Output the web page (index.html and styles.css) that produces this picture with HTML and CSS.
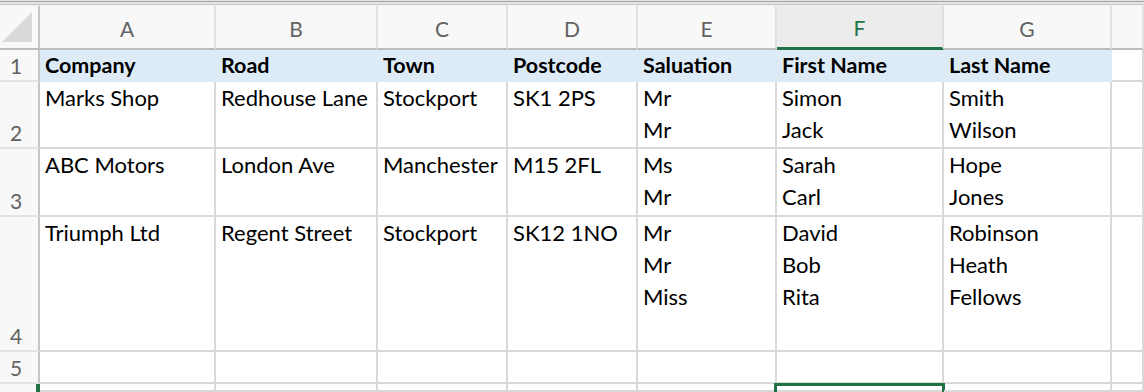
FILE: index.html
```html
<!DOCTYPE html>
<html lang="en">
<head>
  <meta charset="UTF-8">
  <title>Contacts</title>
  <link rel="stylesheet" href="styles.css">
</head>
<body>
  <div class="window-edge"></div>
  <div class="sheet">
    <div class="corner"><span class="corner-mark"></span></div>
    <div class="col-head">A</div>
    <div class="col-head">B</div>
    <div class="col-head">C</div>
    <div class="col-head">D</div>
    <div class="col-head">E</div>
    <div class="col-head active">F</div>
    <div class="col-head">G</div>
    <div class="col-head"></div>

    <div class="row-head">1</div>
    <div class="cell heading">Company</div>
    <div class="cell heading">Road</div>
    <div class="cell heading">Town</div>
    <div class="cell heading">Postcode</div>
    <div class="cell heading">Saluation</div>
    <div class="cell heading">First Name</div>
    <div class="cell heading last">Last Name</div>
    <div class="cell"></div>

    <div class="row-head">2</div>
    <div class="cell">Marks Shop</div>
    <div class="cell">Redhouse Lane</div>
    <div class="cell">Stockport</div>
    <div class="cell">SK1 2PS</div>
    <div class="cell">Mr<br>Mr</div>
    <div class="cell">Simon<br>Jack</div>
    <div class="cell">Smith<br>Wilson</div>
    <div class="cell"></div>

    <div class="row-head">3</div>
    <div class="cell">ABC Motors</div>
    <div class="cell">London Ave</div>
    <div class="cell">Manchester</div>
    <div class="cell">M15 2FL</div>
    <div class="cell">Ms<br>Mr</div>
    <div class="cell">Sarah<br>Carl</div>
    <div class="cell">Hope<br>Jones</div>
    <div class="cell"></div>

    <div class="row-head">4</div>
    <div class="cell">Triumph Ltd</div>
    <div class="cell">Regent Street</div>
    <div class="cell">Stockport</div>
    <div class="cell">SK12 1NO</div>
    <div class="cell">Mr<br>Mr<br>Miss</div>
    <div class="cell">David<br>Bob<br>Rita</div>
    <div class="cell">Robinson<br>Heath<br>Fellows</div>
    <div class="cell"></div>

    <div class="row-head">5</div>
    <div class="cell"></div>
    <div class="cell"></div>
    <div class="cell"></div>
    <div class="cell"></div>
    <div class="cell"></div>
    <div class="cell"></div>
    <div class="cell"></div>
    <div class="cell"></div>

    <div class="row-head active"></div>
    <div class="cell"></div>
    <div class="cell"></div>
    <div class="cell"></div>
    <div class="cell"></div>
    <div class="cell"></div>
    <div class="cell selected"></div>
    <div class="cell"></div>
    <div class="cell"></div>
  </div>
</body>
</html>
```

FILE: styles.css
```css
html, body {
  margin: 0;
  padding: 0;
}

body {
  width: 1144px;
  height: 392px;
  overflow: hidden;
  background: #fff;
  font-family: Lato, "Liberation Sans", sans-serif;
  font-size: 22px;
  color: #000;
}

/* thin toolbar edge above the sheet */
.window-edge {
  height: 6px;
  background: linear-gradient(#e2e2e2 0 1px, #a9a9a9 1px 2px, #dcdcdc 2px 3px, #ececec 3px 4px, #c2c2c2 4px 5px, #f2f2f2 5px 6px);
}

.sheet {
  display: grid;
  grid-template-columns: 40px 176px 162px 130px 130px 139px 167px 168px 1fr;
  grid-template-rows: 44px 32px 67px 68px 135px 32px 1fr;
  height: 386px;
}

.corner {
  display: flex;
  align-items: flex-end;
  justify-content: flex-end;
  padding: 0 6px 6px 0;
  background: #f8f8f8;
  border-right: 2px solid #c6c6c6;
  border-bottom: 2px solid #bdbdbd;
  box-sizing: border-box;
}

.corner-mark {
  width: 30px;
  height: 30px;
  background: #dadada;
  clip-path: polygon(100% 0, 100% 100%, 0 100%);
}

.col-head {
  display: flex;
  align-items: center;
  justify-content: center;
  padding-top: 2px;
  font-size: 21px;
  background: #f8f8f8;
  color: #626262;
  border-right: 2px solid #e0e0e0;
  border-bottom: 2px solid #bdbdbd;
  box-sizing: border-box;
}

.col-head.active {
  background: #ececec;
  color: #217346;
  border-bottom: 3px solid #217346;
}

.row-head {
  display: flex;
  align-items: flex-end;
  justify-content: center;
  padding: 0 6px 0 0;
  font-size: 21px;
  line-height: 28px;
  background: #f8f8f8;
  color: #626262;
  border-right: 2px solid #c6c6c6;
  border-bottom: 2px solid #e3e3e3;
  box-sizing: border-box;
}

.row-head.active {
  border-right: 4px solid #217346;
  border-bottom: none;
}

.cell {
  position: relative;
  padding: 0 5px;
  line-height: 32px;
  white-space: nowrap;
  border-right: 2px solid #d9d9d9;
  border-bottom: 2px solid #d9d9d9;
  box-sizing: border-box;
}

.cell.heading {
  line-height: 31px;
  font-size: 21.5px;
  font-weight: bold;
  background: #ddebf7;
  border-color: #ddebf7;
}

/* the active cell outline */
.cell.selected::after {
  content: "";
  position: absolute;
  left: -3px;
  right: -3px;
  top: -1px;
  height: 20px;
  border: 3px solid #217346;
}
```
